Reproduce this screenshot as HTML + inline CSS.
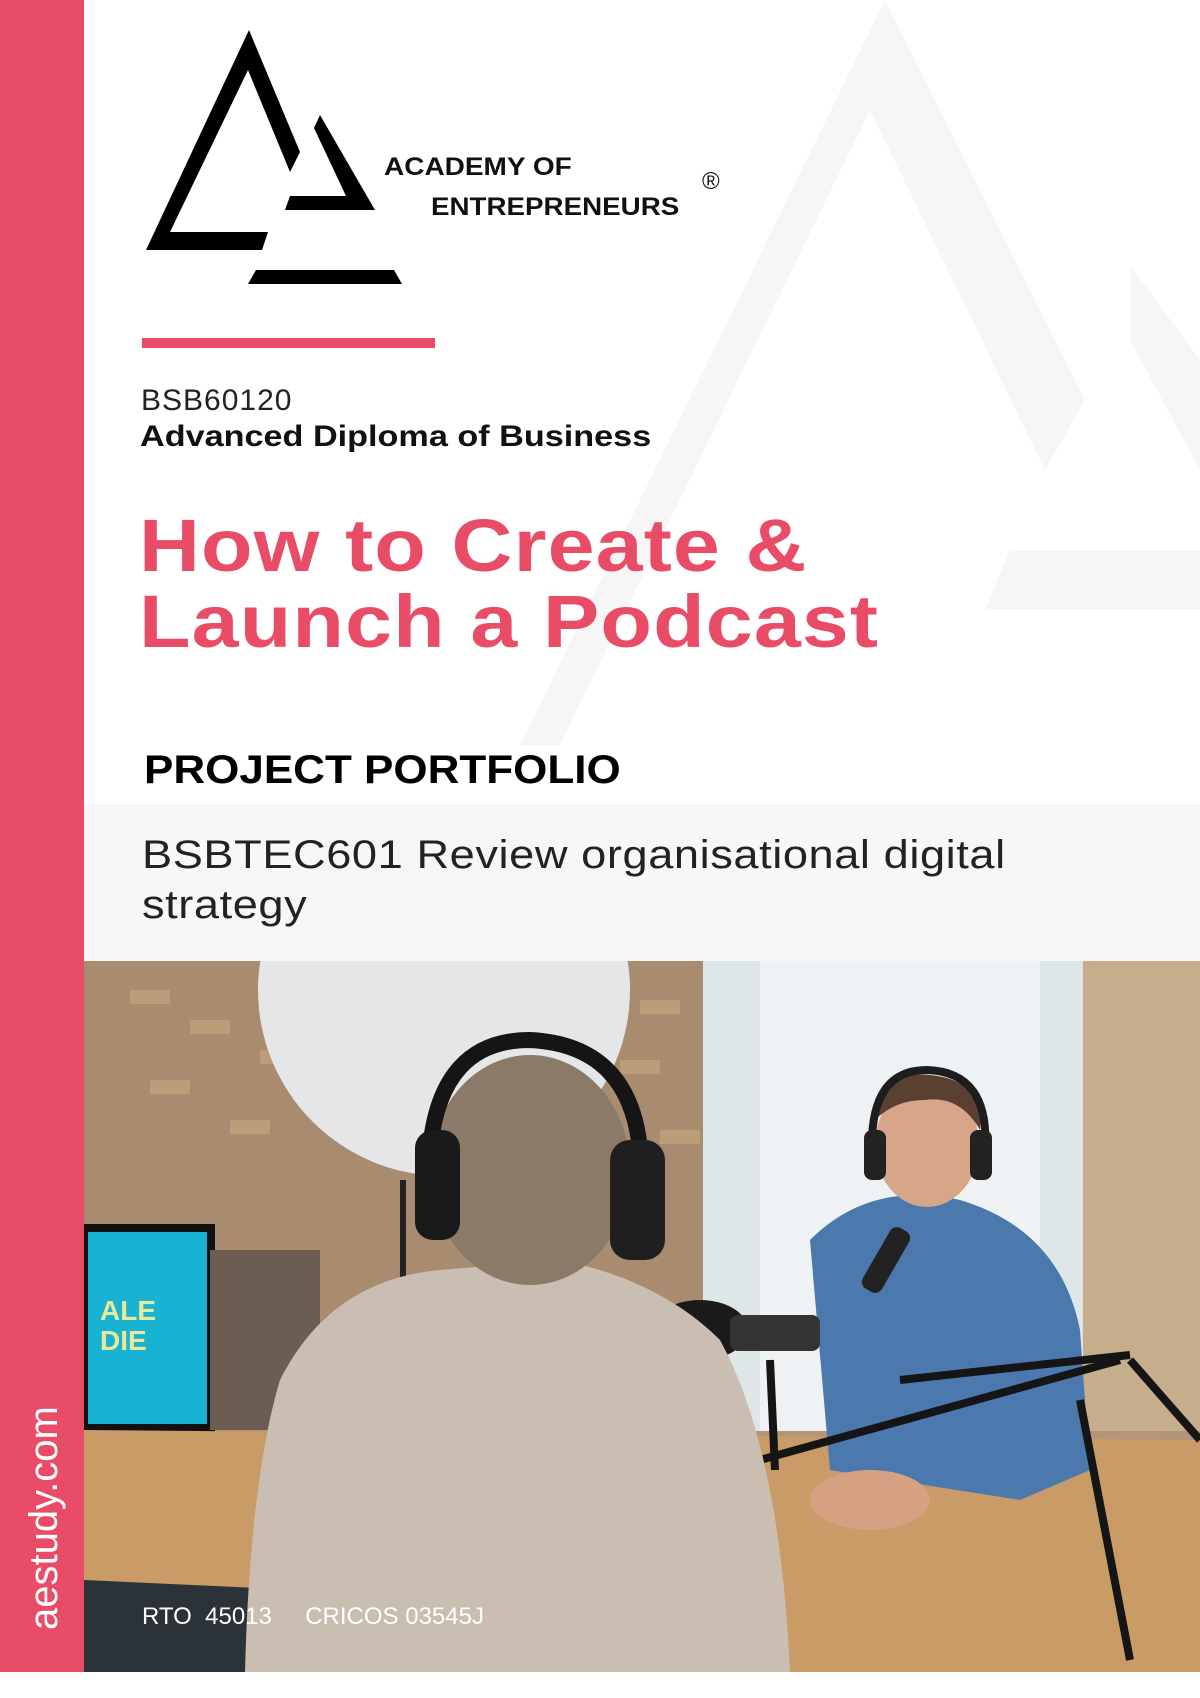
<!DOCTYPE html>
<html><head><meta charset="utf-8"><style>
html,body{margin:0;padding:0}
body{width:1200px;height:1698px;position:relative;overflow:hidden;background:#fff;font-family:"Liberation Sans",sans-serif}
.abs{position:absolute;white-space:nowrap;transform-origin:0 0}
</style></head><body>
<svg class="abs" style="left:0;top:0" width="1200" height="1698">
 <g fill="#f6f6f6">
  <polygon points="885,0 1085,400 1045,470 870,110 560,745 520,745"/>
  <polygon points="1130,265 1200,360 1200,470 1130,340"/>
  <polygon points="1010,550 1200,550 1200,610 985,610"/>
 </g>
 <rect x="84" y="961" width="1116" height="711" fill="#b39578"/>
 <rect x="84" y="961" width="620" height="420" fill="#a98b70"/>
 <g fill="#c9a97f" opacity=".6">
  <rect x="130" y="990" width="40" height="14"/><rect x="190" y="1020" width="40" height="14"/><rect x="260" y="1050" width="40" height="14"/><rect x="150" y="1080" width="40" height="14"/><rect x="230" y="1120" width="40" height="14"/><rect x="640" y="1000" width="40" height="14"/><rect x="620" y="1060" width="40" height="14"/><rect x="660" y="1130" width="40" height="14"/>
 </g>
 <rect x="703" y="961" width="380" height="470" fill="#dfe6e8"/>
 <rect x="760" y="961" width="280" height="470" fill="#eef2f4"/>
 <rect x="1083" y="961" width="117" height="470" fill="#c6ae8c"/>
 <circle cx="444" cy="990" r="186" fill="#e4e6e8"/>
 <rect x="400" y="1180" width="6" height="200" fill="#222"/>
 <rect x="84" y="1228" width="127" height="200" fill="#18b2d3"/>
 <rect x="84" y="1228" width="127" height="200" fill="none" stroke="#111" stroke-width="8"/>
 <text x="100" y="1320" fill="#e8ea9a" font-weight="bold" font-size="28">ALE</text>
 <text x="100" y="1350" fill="#e8ea9a" font-weight="bold" font-size="28">DIE</text>
 <rect x="210" y="1250" width="110" height="180" fill="#6b5d52"/>
 <polygon points="84,1430 1200,1440 1200,1672 84,1672" fill="#c99b66"/>
 <polygon points="84,1580 300,1590 300,1672 84,1672" fill="#2c3338"/>
 <path d="M810,1240 Q870,1180 960,1200 Q1060,1230 1080,1330 L1090,1470 L1020,1500 L830,1470 Z" fill="#4b78ad"/>
 <ellipse cx="927" cy="1145" rx="52" ry="62" fill="#d7a588"/>
 <path d="M875,1120 Q880,1070 930,1075 Q985,1080 980,1130 Q960,1095 925,1100 Q895,1100 875,1120Z" fill="#5a4030"/>
 <path d="M872,1150 Q870,1070 927,1070 Q990,1072 985,1150" fill="none" stroke="#1d1d1d" stroke-width="8"/>
 <rect x="864" y="1130" width="22" height="50" rx="8" fill="#222"/>
 <rect x="970" y="1130" width="22" height="50" rx="8" fill="#222"/>
 <rect x="875" y="1225" width="22" height="70" rx="8" fill="#222" transform="rotate(30 886 1260)"/>
 <ellipse cx="870" cy="1500" rx="60" ry="30" fill="#d6a183"/>
 <g stroke="#151515" stroke-width="8" fill="none">
  <line x1="760" y1="1460" x2="1120" y2="1360"/>
  <line x1="900" y1="1380" x2="1130" y2="1355"/>
  <line x1="1080" y1="1400" x2="1130" y2="1660"/>
  <line x1="1130" y1="1360" x2="1200" y2="1440"/>
  <line x1="770" y1="1360" x2="775" y2="1470"/>
 </g>
 <ellipse cx="700" cy="1330" rx="48" ry="30" fill="#1a1a1a"/>
 <rect x="730" y="1315" width="90" height="36" rx="8" fill="#333"/>
 <path d="M280,1380 Q330,1280 440,1270 L560,1260 Q660,1280 720,1340 Q780,1450 790,1672 L245,1672 Q250,1480 280,1380Z" fill="#cabdb1"/>
 <ellipse cx="530" cy="1170" rx="100" ry="115" fill="#8c7a68"/>
 <path d="M430,1150 Q440,1040 530,1040 Q630,1045 640,1150" fill="none" stroke="#151515" stroke-width="16"/>
 <rect x="415" y="1130" width="45" height="110" rx="18" fill="#1a1a1a"/>
 <rect x="610" y="1140" width="55" height="120" rx="20" fill="#1f1f1f"/>
 <rect x="84" y="804" width="1116" height="157" fill="#f6f6f6" opacity=".93"/>
 <rect x="0" y="1672" width="1200" height="26" fill="#fff"/>
 <rect x="0" y="0" width="84" height="1672" fill="#e84c66"/>
 <g fill="#000">
  <polygon points="249,30 300,152 290,172 248,70 170,232 268,232 262,250 146,250"/>
  <polygon points="320,115 375,210 285,210 290,196 346,196 314,128"/>
  <polygon points="256,270 394,270 402,284 248,284"/>
 </g>
 <rect x="142" y="338" width="293" height="10" fill="#e84c66"/>
</svg>
<div class="abs" style="left:384px;top:153px;font-size:25px;font-weight:bold;color:#111;transform:scaleX(1.12)">ACADEMY OF</div>
<div class="abs" style="left:431px;top:193px;font-size:25px;font-weight:bold;color:#111;transform:scaleX(1.11)">ENTREPRENEURS</div>
<div class="abs" style="left:702px;top:168px;font-size:24px;color:#111">®</div>
<div class="abs" style="left:141px;top:384px;font-size:30px;color:#222;letter-spacing:1px">BSB60120</div>
<div class="abs" style="left:140px;top:420px;font-size:30px;font-weight:bold;color:#111;transform:scaleX(1.14)">Advanced Diploma of Business</div>
<div class="abs" style="left:139px;top:508px;font-size:74px;font-weight:900;color:#e84c66;line-height:76px;letter-spacing:1px;transform:scaleX(1.14)">How to Create &amp;<br>Launch a Podcast</div>
<div class="abs" style="left:144px;top:748px;font-size:40px;font-weight:bold;color:#000;transform:scaleX(1.1)">PROJECT PORTFOLIO</div>
<div class="abs" style="left:142px;top:830px;font-size:40px;color:#222;line-height:50px;letter-spacing:.5px;transform:scaleX(1.13)">BSBTEC601 Review organisational digital<br>strategy</div>
<div class="abs" style="left:142px;top:1603px;font-size:24px;color:#fff">RTO &nbsp;45013 &nbsp;&nbsp;&nbsp;&nbsp;CRICOS 03545J</div>
<div class="abs" style="left:22px;top:1630px;font-size:40px;color:#fff;transform:rotate(-90deg)">aestudy.com</div>
</body></html>
